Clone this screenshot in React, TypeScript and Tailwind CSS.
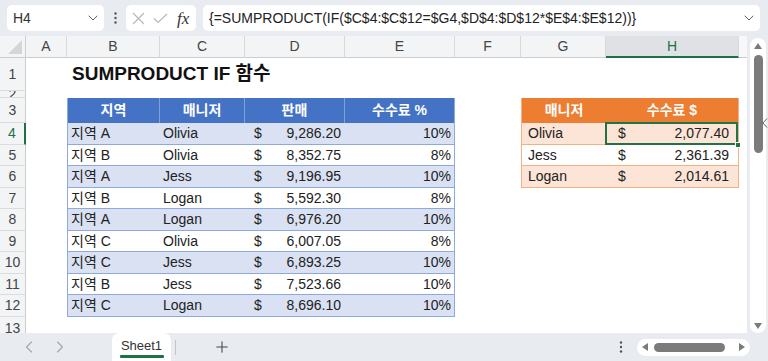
import React from "react";
import { ChevronDown, ChevronLeft, ChevronRight, Plus } from "lucide-react";

const data: [string, string, string, string][] = [
  ["지역 A", "Olivia", "9,286.20", "10%"],
  ["지역 B", "Olivia", "8,352.75", "8%"],
  ["지역 A", "Jess", "9,196.95", "10%"],
  ["지역 B", "Logan", "5,592.30", "8%"],
  ["지역 A", "Logan", "6,976.20", "10%"],
  ["지역 C", "Olivia", "6,007.05", "8%"],
  ["지역 C", "Jess", "6,893.25", "10%"],
  ["지역 B", "Jess", "7,523.66", "10%"],
  ["지역 C", "Logan", "8,696.10", "10%"],
];

const right: [string, string][] = [
  ["Olivia", "2,077.40"],
  ["Jess", "2,361.39"],
  ["Logan", "2,014.61"],
];

function FormulaBar() {
  return (
    <div className="h-[36px] flex items-start pt-[5px] pl-[7px]">
      <div className="w-[97px] h-[26px] bg-white rounded-[5px] flex items-center justify-between pl-[6px] pr-[3px]">
        <span className="text-[14px] text-[#333]">H4</span>
        <ChevronDown size={16} strokeWidth={1.4} className="text-[#555]" />
      </div>
      <div className="w-[22px] h-[26px] flex items-center justify-center">
        <svg width="3" height="12" viewBox="0 0 3 12">
          <circle cx="1.5" cy="1.5" r="1.2" fill="#555" />
          <circle cx="1.5" cy="6" r="1.2" fill="#555" />
          <circle cx="1.5" cy="10.5" r="1.2" fill="#555" />
        </svg>
      </div>
      <div className="w-[70px] h-[26px] bg-white rounded-[5px] flex items-center pl-[6px]">
        <svg width="13" height="13" viewBox="0 0 13 13">
          <path d="M1 1L12 12M12 1L1 12" stroke="#b8b8b8" strokeWidth="1.2" fill="none" />
        </svg>
        <svg width="15" height="11" viewBox="0 0 15 11" className="ml-[8px]">
          <path d="M1 5.5L5 9.5L14 1" stroke="#b8b8b8" strokeWidth="1.2" fill="none" />
        </svg>
        <span className="ml-[9px] italic font-['Liberation_Serif',serif] text-[17px] leading-none text-[#333]">
          fx
        </span>
      </div>
      <div className="ml-[7px] w-[557px] h-[26px] bg-white rounded-[5px] flex items-center justify-between pl-[6px] pr-[3px]">
        <span className="text-[14px] whitespace-nowrap text-[#222]">
          {"{=SUMPRODUCT(IF($C$4:$C$12=$G4,$D$4:$D$12*$E$4:$E$12))}"}
        </span>
        <ChevronDown size={16} strokeWidth={1.4} className="text-[#555]" />
      </div>
    </div>
  );
}

const HDR =
  "bg-[#f3f4f6] border-r border-r-[#d9d9d9] border-b border-b-[#cdcdcd] flex items-center justify-center text-[14px] text-[#444]";
const HDR_SEL =
  "bg-[#dfe1e4] border-r border-r-[#d9d9d9] border-b-2 border-b-[#1e7145] flex items-center justify-center text-[14px] text-[#1e7145]";
const RH =
  "bg-[#f3f4f6] border-r border-r-[#cdcdcd] border-b border-b-[#dcdcdc] flex items-center justify-center text-[14px] text-[#444] overflow-hidden";
const RH_SEL =
  "bg-[#f3f4f6] border-r-2 border-r-[#1e7145] border-b border-b-[#dcdcdc] flex items-center justify-center text-[14px] text-[#1e7145] overflow-hidden";

function Sheet() {
  const cells: React.ReactNode[] = [];
  // column header row
  cells.push(
    <div key="corner" className="bg-[#f3f4f6] border-r border-r-[#cdcdcd] border-b border-b-[#cdcdcd] relative">
      <svg className="absolute right-[3px] bottom-[3px]" width="14" height="14" viewBox="0 0 14 14">
        <polygon points="14,0 14,14 0,14" fill="#d4d5d8" />
      </svg>
    </div>
  );
  ["A", "B", "C", "D", "E", "F", "G", "H"].forEach((l) =>
    cells.push(
      <div key={"col" + l} className={l === "H" ? HDR_SEL : HDR}>
        {l}
      </div>
    )
  );
  cells.push(<div key="colI" className="bg-[#f7f8f9] border-b border-b-[#cdcdcd]" />);

  // row 1
  cells.push(
    <div key="rh1" className={RH}>
      1
    </div>
  );
  cells.push(<div key="r1a" />);
  cells.push(
    <div key="r1b" className="col-span-8 flex items-center pl-[5px] text-[19px] font-bold text-[#111] whitespace-nowrap">
      SUMPRODUCT IF 함수
    </div>
  );

  // row 2
  cells.push(
    <div key="rh2" className={RH}>
      2
    </div>
  );
  cells.push(<div key="r2" className="col-span-9" />);

  // row 3 (headers)
  cells.push(
    <div key="rh3" className={RH}>
      3
    </div>
  );
  cells.push(<div key="r3a" />);
  cells.push(
    <div key="r3b" className="bg-[#4472c4] border-l border-l-[#8ea9db] border-r border-r-[#7f9fd6] text-white font-bold text-[14px] flex items-center justify-center">
      지역
    </div>
  );
  cells.push(
    <div key="r3c" className="bg-[#4472c4] border-r border-r-[#7f9fd6] text-white font-bold text-[14px] flex items-center justify-center">
      매니저
    </div>
  );
  cells.push(
    <div key="r3d" className="bg-[#4472c4] border-r border-r-[#7f9fd6] text-white font-bold text-[14px] flex items-center justify-center">
      판매
    </div>
  );
  cells.push(
    <div key="r3e" className="bg-[#4472c4] border-r border-r-[#8ea9db] text-white font-bold text-[14px] flex items-center justify-center">
      수수료 %
    </div>
  );
  cells.push(<div key="r3f" />);
  cells.push(
    <div key="r3g" className="bg-[#ed7d31] border-l border-l-[#f4b084] text-white font-bold text-[14px] flex items-center justify-center">
      매니저
    </div>
  );
  cells.push(
    <div key="r3h" className="bg-[#ed7d31] border-r border-r-[#f4b084] text-white font-bold text-[14px] flex items-center justify-center">
      수수료 $
    </div>
  );
  cells.push(<div key="r3i" />);

  // data rows 4..12
  data.forEach((d, i) => {
    const n = i + 4;
    const band = i % 2 === 0;
    const bg = band ? "bg-[#d9e1f2]" : "bg-white";
    cells.push(
      <div key={"rh" + n} className={n === 4 ? RH_SEL : RH}>
        {n}
      </div>
    );
    cells.push(<div key={"a" + n} />);
    cells.push(
      <div key={"b" + n} className={bg + " border-l border-l-[#8ea9db] border-b border-b-[#8ea9db] flex items-center pl-[3px] text-[14px] whitespace-nowrap"}>
        {d[0]}
      </div>
    );
    cells.push(
      <div key={"c" + n} className={bg + " border-b border-b-[#8ea9db] flex items-center pl-[3px] text-[14px]"}>
        {d[1]}
      </div>
    );
    cells.push(
      <div key={"d" + n} className={bg + " border-b border-b-[#8ea9db] flex items-center justify-between pl-[9px] pr-[4px] text-[14px]"}>
        <span>$</span>
        <span>{d[2]}</span>
      </div>
    );
    cells.push(
      <div key={"e" + n} className={bg + " border-r border-r-[#8ea9db] border-b border-b-[#8ea9db] flex items-center justify-end pr-[3px] text-[14px]"}>
        {d[3]}
      </div>
    );
    cells.push(<div key={"f" + n} />);
    if (i < 3) {
      const r = right[i];
      const rbg = i % 2 === 0 ? "bg-[#fce4d6]" : "bg-white";
      cells.push(
        <div key={"g" + n} className={rbg + " border-l border-l-[#f4b084] border-b border-b-[#f4b084] flex items-center pl-[6px] text-[14px]"}>
          {r[0]}
        </div>
      );
      cells.push(
        <div key={"h" + n} className={rbg + " relative border-r border-r-[#f4b084] border-b border-b-[#f4b084] flex items-center justify-between pl-[12px] pr-[9px] text-[14px]"}>
          <span>$</span>
          <span>{r[1]}</span>
          {i === 0 && (
            <>
              <div className="absolute left-[-1px] top-[-1px] right-0 bottom-[-1px] border-2 border-[#217346] z-10" />
              <div className="absolute right-[-3px] bottom-[-4px] w-[6px] h-[6px] bg-[#217346] border border-white z-20" />
            </>
          )}
        </div>
      );
    } else {
      cells.push(<div key={"g" + n} />);
      cells.push(<div key={"h" + n} />);
    }
    cells.push(<div key={"i" + n} />);
  });

  // row 13
  cells.push(
    <div key="rh13" className="bg-[#f3f4f6] border-r border-r-[#cdcdcd] overflow-hidden">
      <div className="h-[22px] flex items-center justify-center text-[14px] text-[#444]">13</div>
    </div>
  );
  cells.push(<div key="r13" className="col-span-9" />);

  return (
    <div className="w-[747px] h-[297px] bg-white overflow-hidden grid grid-cols-[26px_41px_93px_85px_100px_110px_66px_85px_133px_8px] grid-rows-[22px_33px_7px_25px_22px_21px_22px_21px_22px_21px_22px_21px_22px_16px]">
      {cells}
    </div>
  );
}

function VScroll() {
  return (
    <div className="w-[21px] h-[297px] relative pt-[2px] pl-[3px]">
      <div className="w-[16px] h-[295px] bg-white rounded-[8px] flex flex-col items-center">
        <svg width="8" height="6" viewBox="0 0 8 6" className="mt-[5px]">
          <polygon points="4,0 8,6 0,6" fill="#7a7a7a" />
        </svg>
        <div className="mt-[6px] w-[9px] h-[98px] bg-[#7b7b7b] rounded-full" />
        <div className="flex-1" />
        <svg width="8" height="6" viewBox="0 0 8 6" className="mb-[4px]">
          <polygon points="0,0 8,0 4,6" fill="#7a7a7a" />
        </svg>
      </div>
      <svg width="6" height="10" viewBox="0 0 6 10" className="absolute left-[15px] top-[82px]">
        <polyline points="5,0.5 1,5 5,9.5" stroke="#666" strokeWidth="1" fill="none" />
      </svg>
    </div>
  );
}

function TabBar() {
  return (
    <div className="h-[28px] flex items-stretch">
      <div className="w-[112px] flex items-center">
        <ChevronLeft size={20} strokeWidth={1.3} className="text-[#a5a5a5] ml-[19px]" />
        <ChevronRight size={20} strokeWidth={1.3} className="text-[#a5a5a5] ml-[11px]" />
      </div>
      <div className="w-[59px] bg-white rounded-t-[7px] flex flex-col items-center pt-[5px]">
        <span className="text-[13px] leading-[15px] text-[#333]">Sheet1</span>
        <div className="w-[44px] h-[3px] bg-[#1e7145] mt-[2px] rounded-[1px]" />
      </div>
      <div className="self-center ml-[4px] w-px h-[15px] bg-[#c4c4c4]" />
      <Plus size={18} strokeWidth={1.4} className="self-center ml-[37px] text-[#444]" />
      <div className="flex-1" />
      <svg width="4" height="12" viewBox="0 0 4 12" className="self-center">
        <circle cx="2" cy="1.5" r="1.2" fill="#555" />
        <circle cx="2" cy="6" r="1.2" fill="#555" />
        <circle cx="2" cy="10.5" r="1.2" fill="#555" />
      </svg>
      <div className="self-center ml-[14px] w-[113px] h-[17px] bg-white rounded-full flex items-center pl-[5px]">
        <svg width="6" height="8" viewBox="0 0 6 8">
          <polygon points="0,4 6,0 6,8" fill="#7a7a7a" />
        </svg>
        <div className="ml-[6px] w-[71px] h-[9px] bg-[#7b7b7b] rounded-full" />
        <svg width="6" height="8" viewBox="0 0 6 8" className="ml-[14px]">
          <polygon points="6,4 0,0 0,8" fill="#7a7a7a" />
        </svg>
      </div>
      <div className="w-[18px]" />
    </div>
  );
}

export default function App() {
  return (
    <div className="w-[768px] h-[361px] overflow-hidden bg-[#e8ebf0] flex flex-col font-['Liberation_Sans','Noto_Sans_CJK_KR',sans-serif] text-[#222]">
      <FormulaBar />
      <div className="flex h-[297px]">
        <Sheet />
        <VScroll />
      </div>
      <TabBar />
    </div>
  );
}
